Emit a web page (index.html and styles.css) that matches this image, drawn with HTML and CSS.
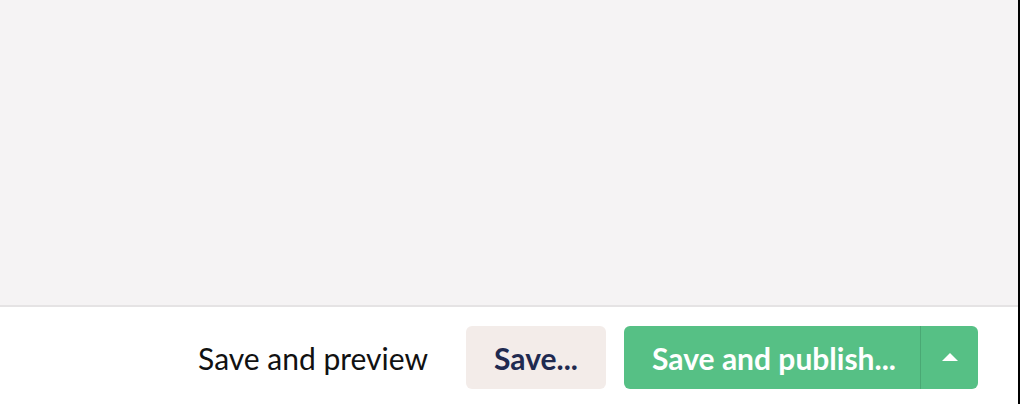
FILE: index.html
```html
<!DOCTYPE html>
<html>
<head>
<meta charset="utf-8">
<link rel="stylesheet" href="styles.css">
</head>
<body>
<div class="page">
  <div class="canvas"></div>
  <div class="footer">
    <button class="btn btn-link">Save and preview</button>
    <button class="btn btn-secondary">Save...</button>
    <div class="split">
      <button class="btn btn-primary">Save and publish...</button>
      <button class="btn btn-caret" aria-label="More options">
        <svg width="16" height="8" viewBox="0 0 16 8"><polygon points="0,8 8,0 16,8" fill="#fff"/></svg>
      </button>
    </div>
  </div>
</div>
</body>
</html>
```

FILE: styles.css
```css
html, body {
  margin: 0;
  padding: 0;
  background: #000;
  height: 404px;
  overflow: hidden;
}
.page {
  width: 1018px;
  height: 404px;
  display: flex;
  flex-direction: column;
  font-family: Lato, "Open Sans", sans-serif;
}
.canvas {
  flex: 1;
  background: #f5f3f4;
  border-bottom: 2px solid #e5e3e4;
}
.footer {
  height: 97px;
  background: #fff;
  display: flex;
  align-items: flex-start;
  justify-content: flex-end;
  padding: 19px 40px 0 0;
  box-sizing: border-box;
}
.btn {
  border: 0;
  font-family: inherit;
  font-size: 30px;
  height: 63px;
  padding: 0;
  border-radius: 6px;
  cursor: pointer;
  display: flex;
  align-items: center;
  justify-content: center;
}
.btn-link {
  background: transparent;
  color: #111;
  font-weight: 400;
  margin-right: 38px;
}
.btn-secondary {
  background: #f3ece9;
  color: #1f2a50;
  font-weight: 700;
  width: 140px;
  margin-right: 18px;
}
.split {
  display: flex;
}
.btn-primary {
  background: #56c085;
  color: #fff;
  font-weight: 700;
  width: 297px;
  padding-left: 4px;
  border-radius: 6px 0 0 6px;
  border-right: 1px solid #4aa874;
}
.btn-caret {
  background: #56c085;
  width: 57px;
  border-radius: 0 6px 6px 0;
}
.btn-caret svg {
  display: block;
  margin-top: -2px;
}
```
